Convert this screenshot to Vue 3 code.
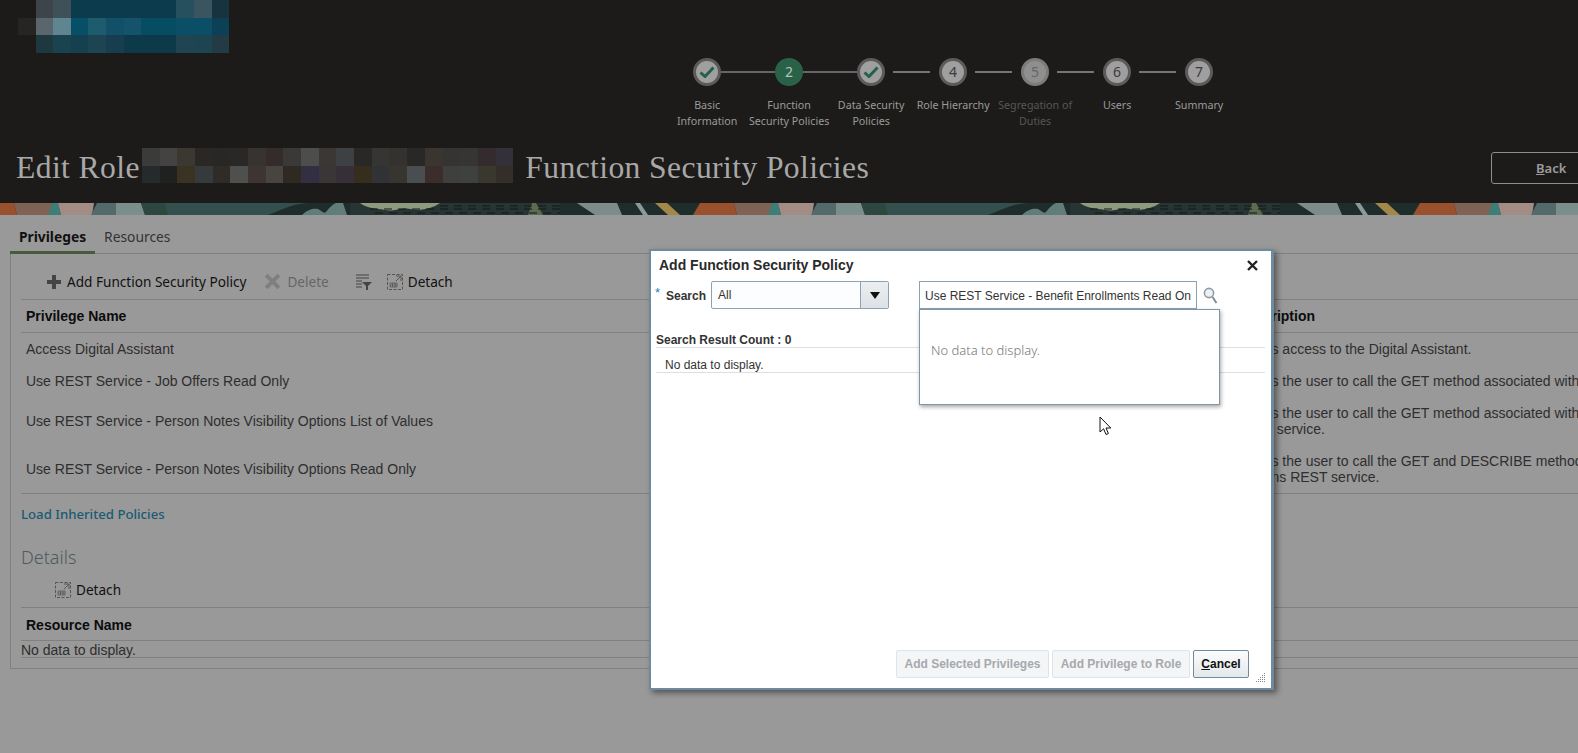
<template>
  <div class="page">
    <header class="header">
      <div class="top">
        <div class="logo">
          <i v-for="(c, i) in logoBlocks" :key="i" :style="{ background: c }"></i>
        </div>
        <ol class="train">
          <li v-for="step in steps" :key="step.n" class="step" :class="step.state">
            <span v-if="step.n > 1" class="link" :class="{ joined: step.n <= 3 }"></span>
            <span class="dot">
              <svg v-if="step.state === 'done'" width="16" height="12" viewBox="0 0 16 12">
                <path d="M1.5 6.5 L6 10.5 L14.5 1.5" fill="none" stroke="#256049" stroke-width="3" />
              </svg>
              <template v-else>{{ step.n }}</template>
            </span>
            <span class="step-label" v-html="step.label"></span>
          </li>
        </ol>
      </div>
      <div class="title-row">
        <h1>Edit Role</h1>
        <div class="title-blur">
          <i v-for="(c, i) in titleBlocks" :key="i" :style="{ background: c }"></i>
        </div>
        <h1>Function Security Policies</h1>
        <button class="back"><u>B</u>ack</button>
      </div>
    </header>

    <svg class="banner" width="1578" height="12">
      <defs>
        <pattern id="bannerTile" x="-160" y="0" width="720" height="12" patternUnits="userSpaceOnUse">
          <g transform="translate(160)">
            <rect x="-160" y="0" width="720" height="12" fill="#1e2c2b" />
            <polygon points="-143,0 -103,0 -98,12 -125,12" fill="#7d8b8b" />
            <polygon points="-85,0 -80,0 -72,12 -77,12" fill="#8a9a98" />
            <polygon points="-65,0 -53,0 -40,12 -52,12" fill="#a3864a" />
            <polygon points="-20,0 14,0 17,12 -27,12" fill="#99502d" />
            <polygon points="14,0 52,0 50,12 17,12" fill="#7e6355" />
            <polygon points="52,0 58,0 61,12 48,12" fill="#3e7d78" />
            <polygon points="58,0 94,0 92,12 61,12" fill="#a18d83" />
            <polygon points="97,0 116,0 116,12 91,12" fill="#536a6a" />
            <polygon points="116,0 141,0 145,12 116,12" fill="#7a8e8c" />
            <polygon points="141,0 345,0 345,12 145,12" fill="#2e4640" />
            <polygon points="165,0 345,0 345,12 168,12" fill="#33504f" />
            <path d="M268,12 C285,5 295,0 310,0 L350,0 L350,12 Z" fill="#1e2d2c" />
            <path d="M302,12 C308,6 314,5 318,6 C322,8 324,11 326,9 C330,4 332,2 336,0 L343,0 L347,12 Z" fill="#627c7c" />
            <rect x="350" y="0" width="227" height="12" fill="#263433" />
            <path d="M360,0 L440,0 C432,6 420,8 410,6 C400,4 395,9 385,7 C375,5 368,6 360,0 Z" fill="#8d9a80" />
            <polygon points="532,0 536,0 543,12 528,12" fill="#5c6a50" />
            <path d="M440,3 H577 M370,6 H575 M375,10 H577" stroke="#0f1716" stroke-width="1" stroke-dasharray="8 6" />
          </g>
        </pattern>
      </defs>
      <rect width="1578" height="12" fill="url(#bannerTile)" />
    </svg>

    <main class="content">
      <nav class="tabs">
        <span class="tab active">Privileges</span>
        <span class="tab">Resources</span>
      </nav>
      <section class="panel">
        <div class="toolbar first">
          <span class="tool">
            <svg width="14" height="14" viewBox="0 0 14 14"><path d="M5 0h4v5h5v4H9v5H5V9H0V5h5z" fill="#444" /></svg>
            Add Function Security Policy
          </span>
          <span class="tool off">
            <svg width="17" height="17" viewBox="0 0 16 16"><path d="M2 2 L14 14 M14 2 L2 14" stroke="#7f7f7f" stroke-width="3.6" /></svg>
            Delete
          </span>
          <span class="tool icon-only">
            <svg width="17" height="16" viewBox="0 0 17 16">
              <path d="M1 1h13M1 4h13M1 7h6M1 10h6M1 13h6" stroke="#444" stroke-width="1.2" fill="none" />
              <path d="M7 8h10l-4 4v4h-2v-4z" fill="#444" />
            </svg>
          </span>
          <span class="tool detach">
            <svg width="16" height="16" viewBox="0 0 16 16">
              <rect x=".5" y=".5" width="15" height="15" fill="none" stroke="#555" stroke-dasharray="3 1.5" />
              <path d="M9 2h5v5M14 2 9 7" fill="none" stroke="#555" />
              <path d="M3 9h7v4H3zM3 11h7M5.5 9v4M8 9v4" fill="none" stroke="#555" stroke-width=".8" />
            </svg>
            Detach
          </span>
        </div>

        <div class="grid-head">
          <span>Privilege Name</span>
          <span>Description</span>
        </div>
        <div v-for="row in rows" :key="row.name" class="grid-row">
          <span class="name">{{ row.name }}</span>
          <span class="desc"><template v-for="line in row.desc" :key="line"><span>{{ line }}</span></template></span>
        </div>

        <a class="load-link">Load Inherited Policies</a>
        <h2>Details</h2>

        <div class="toolbar second">
          <span class="tool detach">
            <svg width="16" height="16" viewBox="0 0 16 16">
              <rect x=".5" y=".5" width="15" height="15" fill="none" stroke="#555" stroke-dasharray="3 1.5" />
              <path d="M9 2h5v5M14 2 9 7" fill="none" stroke="#555" />
              <path d="M3 9h7v4H3zM3 11h7M5.5 9v4M8 9v4" fill="none" stroke="#555" stroke-width=".8" />
            </svg>
            Detach
          </span>
        </div>
        <div class="res-head">Resource Name</div>
        <div class="res-empty">No data to display.</div>
      </section>
    </main>

    <div class="dialog">
      <div class="dlg-title">
        <span>Add Function Security Policy</span>
        <svg width="11" height="11" viewBox="0 0 11 11"><path d="M1 1 L10 10 M10 1 L1 10" stroke="#222" stroke-width="2.4" /></svg>
      </div>
      <div class="search-row">
        <span class="star">*</span>
        <span class="search-label">Search</span>
        <div class="select">
          <span class="select-value">All</span>
          <span class="select-btn"><i></i></span>
        </div>
        <div class="input-wrap">
          <div class="input"><span>Use REST Service - Benefit Enrollments Read Only</span></div>
          <div class="popup">No data to display.</div>
        </div>
        <svg class="lens" width="15" height="17" viewBox="0 0 15 17">
          <circle cx="6" cy="6" r="4.6" fill="#eef2f4" stroke="#8f9da6" stroke-width="1.6" />
          <path d="M9.5 10 L13.5 16" stroke="#7f8d96" stroke-width="2" />
        </svg>
      </div>
      <div class="count">Search Result Count : 0</div>
      <div class="empty">No data to display.</div>
      <div class="dlg-footer">
        <button class="btn add-selected" disabled>Add Selected Privileges</button>
        <button class="btn add-role" disabled>Add Privilege to Role</button>
        <button class="btn cancel"><u>C</u>ancel</button>
      </div>
      <svg class="grip" width="10" height="10" viewBox="0 0 10 10">
        <path d="M8 1h1v1H8zM6 3h1v1H6zM8 3h1v1H8zM4 5h1v1H4zM6 5h1v1H6zM8 5h1v1H8zM2 7h1v1H2zM4 7h1v1H4zM6 7h1v1H6zM8 7h1v1H8zM0 9h1v1H0zM2 9h1v1H2zM4 9h1v1H4zM6 9h1v1H6zM8 9h1v1H8z" fill="#8a8a8a" />
      </svg>
    </div>

    <svg class="cursor" width="13" height="20" viewBox="0 0 13 20">
      <path d="M1 1 V16 L4.6 12.8 L7 18.5 L9.4 17.5 L7 12 H11.8 Z" fill="#fff" stroke="#111" stroke-width="1" />
    </svg>
  </div>
</template>

<script setup>
const steps = [
  { n: 1, state: 'done', label: 'Basic<br>Information' },
  { n: 2, state: 'current', label: 'Function<br>Security Policies' },
  { n: 3, state: 'done', label: 'Data Security<br>Policies' },
  { n: 4, state: 'todo', label: 'Role Hierarchy' },
  { n: 5, state: 'disabled', label: 'Segregation of<br>Duties' },
  { n: 6, state: 'todo', label: 'Users' },
  { n: 7, state: 'todo', label: 'Summary' },
];

const rows = [
  { name: 'Access Digital Assistant', desc: ['Allows access to the Digital Assistant.'] },
  {
    name: 'Use REST Service - Job Offers Read Only',
    desc: ['Allows the user to call the GET method associated with'],
  },
  {
    name: 'Use REST Service - Person Notes Visibility Options List of Values',
    desc: ['Allows the user to call the GET method associated with', 'Value service.'],
  },
  {
    name: 'Use REST Service - Person Notes Visibility Options Read Only',
    desc: ['Allows the user to call the GET and DESCRIBE methods', 'Options REST service.'],
  },
];

// pixelated blocks that hide the logo and the role name
const bg = '#1c1b19';
const logoBlocks = [
  bg, '#3d454b', '#3f5158', '#0b3b4c', '#0b3b4c', '#0b3b4c', '#0b3b4c', '#0b3b4c', '#0b3b4c', '#27505e', '#3a5560', '#183340',
  '#262524', '#5a656c', '#5f8690', '#074f69', '#1e5b6d', '#12506a', '#14536b', '#064c63', '#064c63', '#0a4f66', '#0a4f66', '#0b4057',
  bg, '#1e3840', '#1a4350', '#15404f', '#1c4452', '#173e4e', '#0c3a49', '#0c3a49', '#0c3a49', '#1f4552', '#1c4551', '#223b45',
];
const titleBlocks = [
  '#3b3b39', '#444342', '#3a3830', '#2b2724', '#292725', '#2a2826', '#363330', '#332c2b', '#3a3938', '#4d4d4c', '#3a3734',
  '#3d4143', '#2a2826', '#353634', '#34322e', '#2a2826', '#3a352f', '#363433', '#373534', '#332b2d', '#33303a',
  '#252a2d', '#1f2120', '#3a3223', '#363a3d', '#2f2c28', '#4f4f4d', '#3e3431', '#48443f', '#2e2a22', '#322f42', '#3a3638',
  '#362f38', '#352e1c', '#313236', '#37352f', '#4b4e50', '#3b2e2a', '#3f3f3d', '#3f4040', '#3a382e', '#332e28',
];
</script>

<style>
html, body {
  margin: 0;
  background: #999;
}
</style>

<style scoped>
.page {
  position: relative;
  width: 1578px;
  height: 753px;
  overflow: hidden;
  background: #999;
  font-family: "Liberation Sans", Arial, sans-serif;
  font-size: 14px;
  color: #2e2e2e;
}

.header {
  height: 203px;
  box-sizing: border-box;
  background: #1c1b19;
  display: flex;
  flex-direction: column;
  padding-bottom: 20px;
}

.top {
  display: flex;
  align-items: flex-start;
}

.logo {
  display: grid;
  grid-template-columns: repeat(12, 17.6px);
  grid-auto-rows: 17.6px;
  margin-left: 18px;
}

.train {
  list-style: none;
  display: flex;
  margin: 58px 0 0 437px;
  padding: 0;
}

.step {
  position: relative;
  width: 82px;
  display: flex;
  flex-direction: column;
  align-items: center;
  font-family: "Noto Sans", sans-serif;
  font-size: 10.7px;
  line-height: 16px;
  color: #9a9a9a;
}

.dot {
  position: relative;
  width: 28px;
  height: 28px;
  box-sizing: border-box;
  border-radius: 50%;
  border: 3px solid #5b5b5b;
  background: #9e9f9e;
  color: #40383f;
  font-size: 14px;
  display: flex;
  align-items: center;
  justify-content: center;
}

.current .dot {
  background: #2a6247;
  border-color: #2a6247;
  color: #b4c4ba;
}

.disabled .dot {
  background: #8f8f8f;
  border-color: #7c7c7c;
  color: #666;
}

.disabled .step-label {
  color: #565656;
}

.link {
  position: absolute;
  top: 13px;
  left: -19px;
  width: 37px;
  height: 2px;
  background: #757578;
}

.link.joined {
  left: -27px;
  width: 54px;
  background: #66666a;
}

.step-label {
  margin-top: 11px;
  text-align: center;
  white-space: nowrap;
}

.title-row {
  margin-top: auto;
  display: flex;
  align-items: center;
  padding-left: 16px;
}

h1 {
  margin: 0;
  height: 35px;
  font-family: "Liberation Serif", serif;
  font-weight: 400;
  font-size: 31.6px;
  line-height: 39px;
  letter-spacing: .4px;
  color: #a8a8a8;
  white-space: nowrap;
}

.title-blur {
  display: grid;
  grid-template-columns: repeat(21, 17.7px);
  grid-auto-rows: 17.5px;
  margin: 0 12px 0 2px;
}

.back {
  position: absolute;
  left: 1491px;
  top: 152px;
  width: 120px;
  height: 32px;
  box-sizing: border-box;
  background: transparent;
  border: 1px solid #8e8e8e;
  border-radius: 3px;
  font-family: "Noto Sans", sans-serif;
  font-weight: 600;
  font-size: 13px;
  color: #9c9c9c;
  text-align: left;
  padding: 0 0 0 44px;
}

.banner {
  display: block;
  height: 12px;
}

.content {
  padding-top: 3px;
}

.tabs {
  display: flex;
  height: 36px;
  margin-left: 10px;
  border-bottom: 1px solid #808080;
  box-sizing: border-box;
  font-family: "Noto Sans", sans-serif;
  font-size: 13.8px;
  color: #333;
}

.tab {
  padding: 11px 9px 0;
  line-height: 16px;
}

.tab.active {
  font-weight: 700;
  color: #111;
  height: 36px;
  box-sizing: border-box;
  border-bottom: 3px solid #485a3c;
}

.panel {
  margin-left: 10px;
  height: 415px;
  box-sizing: border-box;
  border-left: 1px solid #808080;
  border-bottom: 1px solid #808080;
  padding-left: 10px;
  display: flex;
  flex-direction: column;
}

.toolbar {
  display: flex;
  align-items: center;
  border-bottom: 1px solid #808080;
  font-family: "Noto Sans", sans-serif;
  font-size: 13.6px;
  color: #111;
  box-sizing: border-box;
}

.toolbar.first {
  height: 46px;
  padding-top: 10px;
  padding-left: 26px;
  gap: 18px;
}

.toolbar.second {
  height: 39px;
  padding-top: 3px;
  padding-left: 34px;
}

.tool {
  display: inline-flex;
  align-items: center;
  gap: 6px;
  white-space: nowrap;
}

.tool.detach {
  gap: 5px;
}

.tool.off {
  color: #666;
}

.tool.icon-only {
  margin-left: 8px;
  margin-right: -3px;
}

.grid-head,
.grid-row {
  display: grid;
  grid-template-columns: 1212px 1fr;
  padding-left: 5px;
  white-space: nowrap;
}

.grid-head {
  height: 33px;
  box-sizing: border-box;
  align-items: center;
  font-weight: 700;
  color: #0c0c0c;
  border-bottom: 1px solid #808080;
}

.grid-row {
  padding-top: 8px;
  padding-bottom: 8px;
  line-height: 16px;
  align-items: center;
}

.desc {
  display: flex;
  flex-direction: column;
}

.load-link {
  border-top: 1px solid #808080;
  padding-top: 12px;
  height: 22px;
  line-height: 16px;
  font-family: "Noto Sans", sans-serif;
  font-size: 13.2px;
  font-weight: 500;
  color: #1a5a72;
}

h2 {
  margin: 17px 0 0;
  font-family: "Noto Sans", sans-serif;
  font-weight: 300;
  font-size: 18px;
  line-height: 24px;
  color: #4e5b5d;
}

.res-head {
  height: 33px;
  box-sizing: border-box;
  padding-left: 5px;
  line-height: 34px;
  font-weight: 700;
  color: #0c0c0c;
  border-bottom: 1px solid #808080;
}

.res-empty {
  height: 16px;
  line-height: 19px;
  border-bottom: 1px solid #808080;
}

.dialog {
  position: absolute;
  left: 649px;
  top: 249px;
  width: 625px;
  height: 441px;
  box-sizing: border-box;
  background: #fff;
  border: 2px solid #6d8a9e;
  border-right-width: 3px;
  box-shadow: 3px 3px 6px rgba(0, 0, 0, .45);
  padding: 0 4px;
  display: flex;
  flex-direction: column;
}

.dlg-title {
  display: flex;
  justify-content: space-between;
  align-items: center;
  height: 30px;
  box-sizing: border-box;
  padding: 0 9px 2px 4px;
  font-weight: 700;
  font-size: 14px;
  color: #2a2a2a;
}

.search-row {
  display: flex;
  align-items: center;
  height: 28px;
  font-size: 12px;
}

.star {
  color: #2a7fb0;
  font-size: 13px;
  width: 11px;
  margin-bottom: 6px;
}

.search-label {
  width: 45px;
  font-weight: 700;
  color: #333;
  padding-top: 1px;
}

.select {
  display: flex;
  width: 178px;
  height: 28px;
  box-sizing: border-box;
  border: 1px solid #8ca2b3;
  border-radius: 2px;
  background: #fcfdfe;
}

.select-value {
  flex: 1;
  line-height: 27px;
  padding-left: 6px;
  color: #333;
}

.select-btn {
  width: 27px;
  border-left: 1px solid #8ca2b3;
  background: linear-gradient(#eceff1, #dde2e6);
  display: flex;
  align-items: center;
  justify-content: center;
}

.select-btn i {
  border-left: 5px solid transparent;
  border-right: 5px solid transparent;
  border-top: 7px solid #111;
}

.input-wrap {
  position: relative;
  margin-left: 30px;
  width: 278px;
}

.input {
  height: 28px;
  box-sizing: border-box;
  border: 1px solid #8ca2b3;
  line-height: 28px;
  padding: 0 5px;
  color: #333;
}

.input span {
  display: block;
  overflow: hidden;
  white-space: nowrap;
}

.popup {
  position: absolute;
  z-index: 2;
  left: 0;
  top: 28px;
  width: 301px;
  height: 96px;
  box-sizing: border-box;
  background: #fff;
  border: 1px solid #7f96a7;
  box-shadow: 1px 2px 4px rgba(0, 0, 0, .35);
  padding: 30px 0 0 11px;
  font-family: "Noto Sans", sans-serif;
  font-weight: 300;
  font-size: 13px;
  color: #777;
  line-height: 20px;
}

.lens {
  margin-left: 6px;
  margin-top: 1px;
}

.count {
  margin-top: 23px;
  margin-left: 1px;
  height: 15px;
  line-height: 16px;
  font-weight: 700;
  font-size: 12px;
  color: #333;
  border-bottom: 1px solid #d9e0e6;
  width: 609px;
}

.empty {
  margin-left: 1px;
  width: 609px;
  box-sizing: border-box;
  padding-left: 9px;
  height: 25px;
  line-height: 34px;
  font-size: 12px;
  color: #333;
  border-bottom: 1px solid #d9e0e6;
}

.dlg-footer {
  margin-top: auto;
  margin-bottom: 10px;
  display: flex;
  justify-content: flex-end;
  gap: 3px;
  padding-right: 18px;
}

.btn {
  height: 28px;
  box-sizing: border-box;
  padding: 0;
  font-family: "Liberation Sans", Arial, sans-serif;
  font-weight: 700;
  font-size: 12px;
  border: 1px solid #dfe4ea;
  border-radius: 2px;
  background: #f3f5f7;
  color: #a6a9ad;
}

.add-selected {
  width: 153px;
}

.add-role {
  width: 138px;
}

.btn.cancel {
  width: 56px;
  border-color: #6d8a9e;
  background: linear-gradient(#fbfcfd, #e4e8eb);
  color: #111;
}

.grip {
  position: absolute;
  right: 5px;
  bottom: 6px;
}

.cursor {
  position: absolute;
  left: 1099px;
  top: 416px;
}
</style>
